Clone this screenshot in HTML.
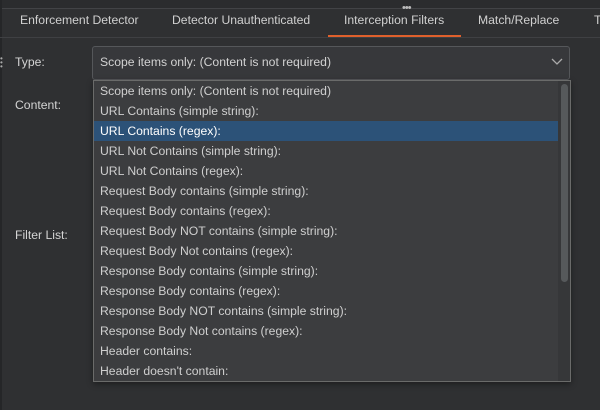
<!DOCTYPE html>
<html><head><style>
body{margin:0;width:600px;height:410px;background:#2f3032;font-family:"Liberation Sans",sans-serif;font-size:12.2px;color:#d4d4d4;position:relative;overflow:hidden}
.a{position:absolute}
.tab{position:absolute;top:13px;color:#d0d0d0;font-size:12.2px}
.it{height:20px;line-height:20px;padding-left:6px;color:#cfcfcf;font-size:12.2px}
</style></head><body>
<div class="a" style="left:0;top:0;width:600px;height:8px;background:#2b2c2e;border-bottom:1px solid #424346"></div>
<div class="a" style="left:402px;top:5px;color:#bbb;font-size:11px;letter-spacing:-1px;line-height:6px">•••</div>
<div class="a" style="left:0;top:0;width:2px;height:410px;background:#252628"></div>
<div class="tab" style="left:20px">Enforcement Detector</div>
<div class="tab" style="left:172px">Detector Unauthenticated</div>
<div class="tab" style="left:344px">Interception Filters</div>
<div class="tab" style="left:478px">Match/Replace</div>
<div class="tab" style="left:594px">T</div>
<div class="a" style="left:0;top:37px;width:600px;height:1px;background:#3f4043"></div>
<div class="a" style="left:328px;top:35px;width:133px;height:2px;background:#e0602c"></div>
<div class="a" style="left:0;top:57px;color:#aaa;font-size:8px;line-height:4px">•<br>•<br>•</div>
<div class="a" style="left:15px;top:55px">Type:</div>
<div class="a" style="left:15px;top:98px">Content:</div>
<div class="a" style="left:15px;top:228px">Filter List:</div>
<div class="a" style="left:92px;top:46px;width:476px;height:32px;background:#37383b;border:1px solid #55575a;border-radius:3px"></div>
<div class="a" style="left:100px;top:55px;color:#d2d2d2">Scope items only: (Content is not required)</div>
<svg class="a" style="left:551px;top:56px" width="12" height="10"><path d="M1 3l5 5 5-5" stroke="#aaa" stroke-width="1.3" fill="none"/></svg>
<div class="a" style="left:93px;top:80px;width:476px;height:300px;background:#3c3d3f;border:1px solid #6a6b6a;box-shadow:0 2px 6px rgba(0,0,0,.4)">
<div class="it">Scope items only: (Content is not required)</div>
<div class="it">URL Contains (simple string):</div>
<div class="it" style="background:#2c5278;color:#fff;margin-right:12px">URL Contains (regex):</div>
<div class="it">URL Not Contains (simple string):</div>
<div class="it">URL Not Contains (regex):</div>
<div class="it">Request Body contains (simple string):</div>
<div class="it">Request Body contains (regex):</div>
<div class="it">Request Body NOT contains (simple string):</div>
<div class="it">Request Body Not contains (regex):</div>
<div class="it">Response Body contains (simple string):</div>
<div class="it">Response Body contains (regex):</div>
<div class="it">Response Body NOT contains (simple string):</div>
<div class="it">Response Body Not contains (regex):</div>
<div class="it">Header contains:</div>
<div class="it">Header doesn't contain:</div>
<div class="a" style="right:0;top:0;width:12px;height:300px;background:#363739"></div>
<div class="a" style="right:2px;top:3px;width:7px;height:198px;background:#56595b;border-radius:4px"></div>
</div>
</body></html>
